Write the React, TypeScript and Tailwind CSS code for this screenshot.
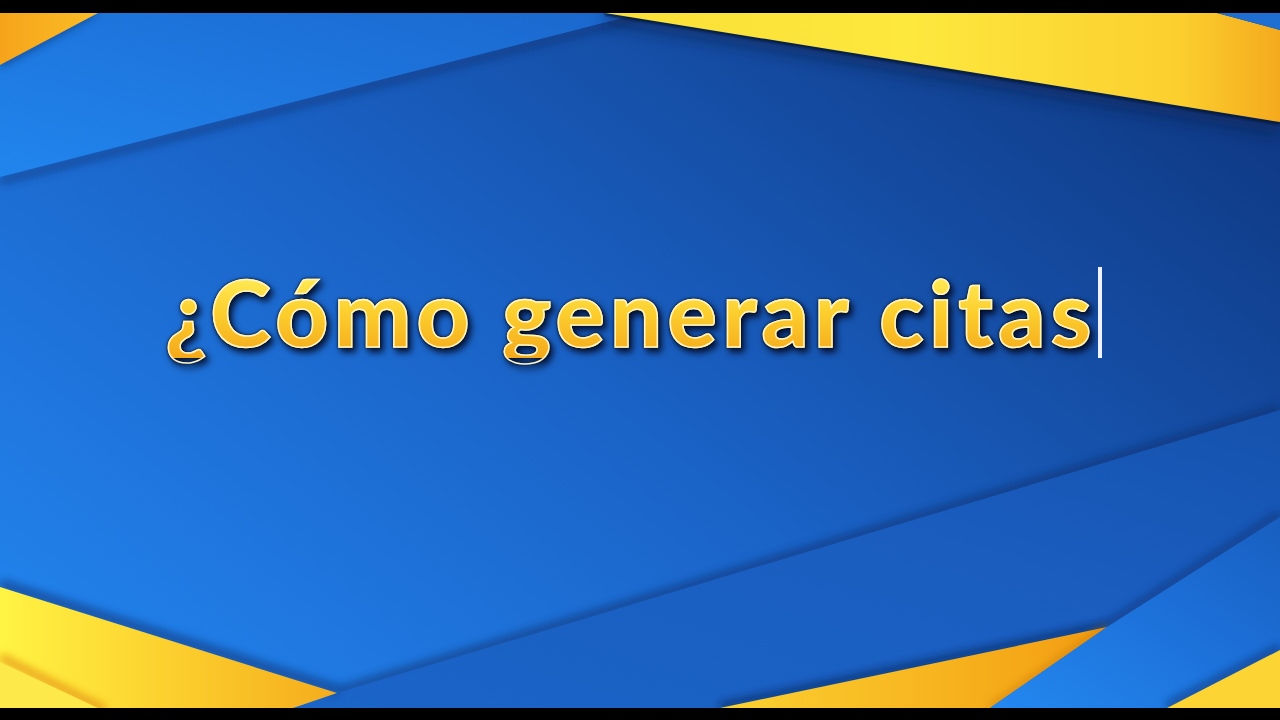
import React from "react";

function Background() {
  return (
    <svg
      className="absolute inset-0 h-full w-full"
      viewBox="0 13 1280 695"
      preserveAspectRatio="none"
    >
      <defs>
        <linearGradient id="base" x1="0" y1="0.85" x2="1" y2="0.1">
          <stop offset="0" stopColor="#2282ec" />
          <stop offset="0.45" stopColor="#1a62c6" />
          <stop offset="0.75" stopColor="#144a9f" />
          <stop offset="1" stopColor="#0e3680" />
        </linearGradient>
        <linearGradient id="tlband" x1="0" y1="1" x2="1" y2="0">
          <stop offset="0" stopColor="#2185ee" />
          <stop offset="1" stopColor="#1a66cc" />
        </linearGradient>
        <linearGradient id="topYellow" x1="0" y1="0" x2="1" y2="0">
          <stop offset="0" stopColor="#fbdf36" />
          <stop offset="0.45" stopColor="#fde83e" />
          <stop offset="0.85" stopColor="#fbcf2e" />
          <stop offset="1" stopColor="#f5aa1e" />
        </linearGradient>
        <linearGradient id="tlOrange" x1="0" y1="0" x2="1" y2="0">
          <stop offset="0" stopColor="#f6a41a" />
          <stop offset="1" stopColor="#fbbd26" />
        </linearGradient>
        <linearGradient id="blYellow" x1="0" y1="0" x2="1" y2="0">
          <stop offset="0" stopColor="#fff444" />
          <stop offset="0.5" stopColor="#fcd02e" />
          <stop offset="1" stopColor="#f5ac1c" />
        </linearGradient>
        <linearGradient id="midYellow" x1="0" y1="0" x2="1" y2="0">
          <stop offset="0" stopColor="#fbd232" />
          <stop offset="0.6" stopColor="#f7b21d" />
          <stop offset="1" stopColor="#f29c12" />
        </linearGradient>
        <linearGradient id="midBand" x1="0" y1="1" x2="1" y2="0">
          <stop offset="0" stopColor="#1b64c8" />
          <stop offset="0.6" stopColor="#1a5dbf" />
          <stop offset="1" stopColor="#1552ad" />
        </linearGradient>
        <linearGradient id="lightBand" x1="0" y1="1" x2="1" y2="0">
          <stop offset="0" stopColor="#2388f0" />
          <stop offset="0.6" stopColor="#1c6ed6" />
          <stop offset="1" stopColor="#185fc0" />
        </linearGradient>
        <filter id="soft" filterUnits="userSpaceOnUse" x="0" y="0" width="1280" height="720">
          <feGaussianBlur stdDeviation="4" />
        </filter>
        <filter id="softer" filterUnits="userSpaceOnUse" x="0" y="0" width="1280" height="720">
          <feGaussianBlur stdDeviation="8" />
        </filter>
        <filter id="thin" filterUnits="userSpaceOnUse" x="0" y="0" width="1280" height="720">
          <feGaussianBlur stdDeviation="1.2" />
        </filter>
      </defs>

      <rect x="0" y="0" width="1280" height="720" fill="url(#base)" />

      {/* top-left lighter band */}
      <line x1="0" y1="181" x2="640" y2="17" stroke="#0a2a66" strokeWidth="8" opacity="0.5" filter="url(#soft)" />
      <polygon points="0,0 642,0 642,13 0,177" fill="url(#tlband)" />

      {/* top-left orange triangle */}
      <polygon points="0,13 100,13 0,68" fill="#0a2350" opacity="0.5" filter="url(#soft)" />
      <polygon points="0,13 98,13 0,65" fill="url(#tlOrange)" />

      {/* top yellow band */}
      <line x1="605" y1="16" x2="1280" y2="128" stroke="#071a45" strokeWidth="14" opacity="0.55" filter="url(#softer)" />
      <line x1="605" y1="14" x2="1280" y2="123.5" stroke="#06122c" strokeWidth="2.5" opacity="0.9" filter="url(#thin)" />
      <polygon points="605,13 1217,13 1280,30 1280,122" fill="url(#topYellow)" />
      <polygon points="1217,13 1280,13 1280,30" fill="#1f6fd2" />

      {/* band below line A */}
      <line x1="337" y1="692" x2="1280" y2="409" stroke="#0a2a66" strokeWidth="10" opacity="0.55" filter="url(#soft)" />
      <polygon points="293,708 337,693 1280,410 1280,517 1107,627 720,708" fill="url(#midBand)" />

      {/* middle yellow triangle */}
      <line x1="720" y1="706" x2="1107" y2="625" stroke="#061a45" strokeWidth="6" opacity="0.7" filter="url(#soft)" />
      <polygon points="720,708 1107,627 990,708" fill="url(#midYellow)" />

      {/* light blue band */}
      <line x1="1107" y1="625" x2="1280" y2="514" stroke="#0a2a66" strokeWidth="8" opacity="0.55" filter="url(#soft)" />
      <line x1="990" y1="708" x2="1107" y2="627" stroke="#b86a08" strokeWidth="6" opacity="0.5" filter="url(#soft)" />
      <polygon points="990,708 1107,627 1280,517 1280,650 1167,708" fill="url(#lightBand)" />

      {/* bottom-right yellow */}
      <line x1="1167" y1="706" x2="1280" y2="648" stroke="#0a2a66" strokeWidth="8" opacity="0.6" filter="url(#soft)" />
      <polygon points="1167,708 1280,650 1280,708" fill="#fcd535" />

      {/* bottom-left yellow */}
      <line x1="0" y1="584" x2="338" y2="690" stroke="#0a2a66" strokeWidth="10" opacity="0.55" filter="url(#soft)" />
      <polygon points="0,587 337,693 293,708 0,708" fill="url(#blYellow)" />
      <line x1="0" y1="657" x2="105" y2="710" stroke="#e48a10" strokeWidth="8" opacity="0.8" filter="url(#soft)" />
      <polygon points="0,662 98,708 0,708" fill="#fde94a" />
    </svg>
  );
}

export default function App() {
  return (
    <div className="flex h-[720px] w-[1280px] flex-col overflow-hidden bg-black">
      <div className="h-[13px] shrink-0 bg-black" />
      <div className="relative h-[695px] shrink-0 overflow-hidden">
        <Background />
        <div className="relative flex items-start pl-[165px] pt-[253px]">
          <h1 className="bg-linear-to-b from-[#fff35e] via-[#fccf2e] to-[#f4a81a] bg-clip-text font-[Lato,sans-serif] text-[92px] font-black leading-none tracking-[5.3px] text-transparent [-webkit-text-stroke:1.5px_#fff6c8] [filter:drop-shadow(0_0_1.5px_#000a20)_drop-shadow(3px_4px_3px_rgba(0,0,20,0.8))]">
            ¿Cómo generar citas
          </h1>
          <span className="ml-[1px] mt-[1px] h-[91px] w-[4px] bg-[#eef3ff]" />
        </div>
      </div>
    </div>
  );
}
